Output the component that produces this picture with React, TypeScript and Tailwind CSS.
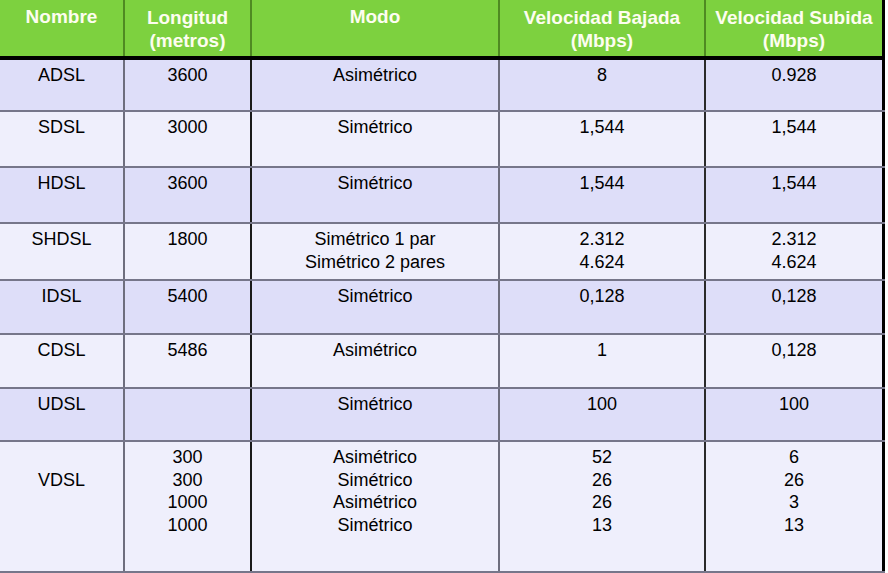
import React from "react";

type Row = {
  name: string;
  len: string[];
  mode: string[];
  down: string[];
  up: string[];
  h: string;
  bg: string;
  namePad?: string;
};

const rows: Row[] = [
  { name: "ADSL", len: ["3600"], mode: ["Asimétrico"], down: ["8"], up: ["0.928"], h: "h-[52px]", bg: "bg-[#dedef9]" },
  { name: "SDSL", len: ["3000"], mode: ["Simétrico"], down: ["1,544"], up: ["1,544"], h: "h-[56px]", bg: "bg-[#efeffc]" },
  { name: "HDSL", len: ["3600"], mode: ["Simétrico"], down: ["1,544"], up: ["1,544"], h: "h-[56px]", bg: "bg-[#dedef9]" },
  {
    name: "SHDSL",
    len: ["1800"],
    mode: ["Simétrico 1 par", "Simétrico 2 pares"],
    down: ["2.312", "4.624"],
    up: ["2.312", "4.624"],
    h: "h-[57px]",
    bg: "bg-[#efeffc]",
  },
  { name: "IDSL", len: ["5400"], mode: ["Simétrico"], down: ["0,128"], up: ["0,128"], h: "h-[54px]", bg: "bg-[#dedef9]" },
  { name: "CDSL", len: ["5486"], mode: ["Asimétrico"], down: ["1"], up: ["0,128"], h: "h-[54px]", bg: "bg-[#efeffc]" },
  { name: "UDSL", len: [""], mode: ["Simétrico"], down: ["100"], up: ["100"], h: "h-[53px]", bg: "bg-[#dedef9]" },
  {
    name: "VDSL",
    len: ["300", "300", "1000", "1000"],
    mode: ["Asimétrico", "Simétrico", "Asimétrico", "Simétrico"],
    down: ["52", "26", "26", "13"],
    up: ["6", "26", "3", "13"],
    h: "h-[131px]",
    bg: "bg-[#efeffc]",
    namePad: "pt-[27px]",
  },
];

const Cell = ({ lines, line, pad = "pt-[4px]" }: { lines: string[]; line: string; pad?: string }) => (
  <div className={`flex flex-col items-center ${pad} ${line}`}>
    {lines.map((l, i) => (
      <span key={i} className="h-[22.5px] leading-[22.5px] whitespace-pre">
        {l}
      </span>
    ))}
  </div>
);

const Header = ({ lines, line, center }: { lines: string[]; line: string; center?: boolean }) => (
  <div
    className={`flex flex-col items-center ${center ? "justify-center pt-[1px]" : "pt-[5px]"} ${line}`}
  >
    {lines.map((l, i) => (
      <span key={i} className="leading-[23px] whitespace-pre">
        {l}
      </span>
    ))}
  </div>
);

export default function App() {
  const cols = "grid grid-cols-[125px_127px_248px_206px_179px]";
  return (
    <div className="w-[888px] h-[573px] bg-white overflow-hidden" style={{ fontFamily: '"Liberation Sans", Arial, sans-serif' }}>
      <div className="w-[885px]">
        <div className={`${cols} h-[60px] bg-[#7dd13f] text-[#fdfdf0] font-bold text-[19px] border-b-4 border-black`}>
          <Header lines={["Nombre"]} line="border-r-2 border-[#4f8a22]" />
          <Header lines={["Longitud", "(metros)"]} line="border-r-2 border-[#4f8a22]" center />
          <Header lines={["Modo"]} line="border-r-2 border-[#4f8a22]" />
          <Header lines={["Velocidad Bajada", "(Mbps)"]} line="border-r-2 border-[#4f8a22]" center />
          <Header lines={["Velocidad Subida", "(Mbps)"]} line="border-r-[3px] border-black" center />
        </div>
        {rows.map((r) => (
          <div key={r.name} className={`${cols} ${r.h} ${r.bg} text-[18px] text-black border-b-2 border-[#76768a]`}>
            <Cell lines={[r.name]} line="border-r-2 border-[#6e6e7e]" pad={r.namePad} />
            <Cell lines={r.len} line="border-r-2 border-[#1a1a1a]" />
            <Cell lines={r.mode} line="border-r-2 border-[#6e6e7e]" />
            <Cell lines={r.down} line="border-r-2 border-[#2a2a2a]" />
            <Cell lines={r.up} line="border-r-[3px] border-black" />
          </div>
        ))}
      </div>
    </div>
  );
}
